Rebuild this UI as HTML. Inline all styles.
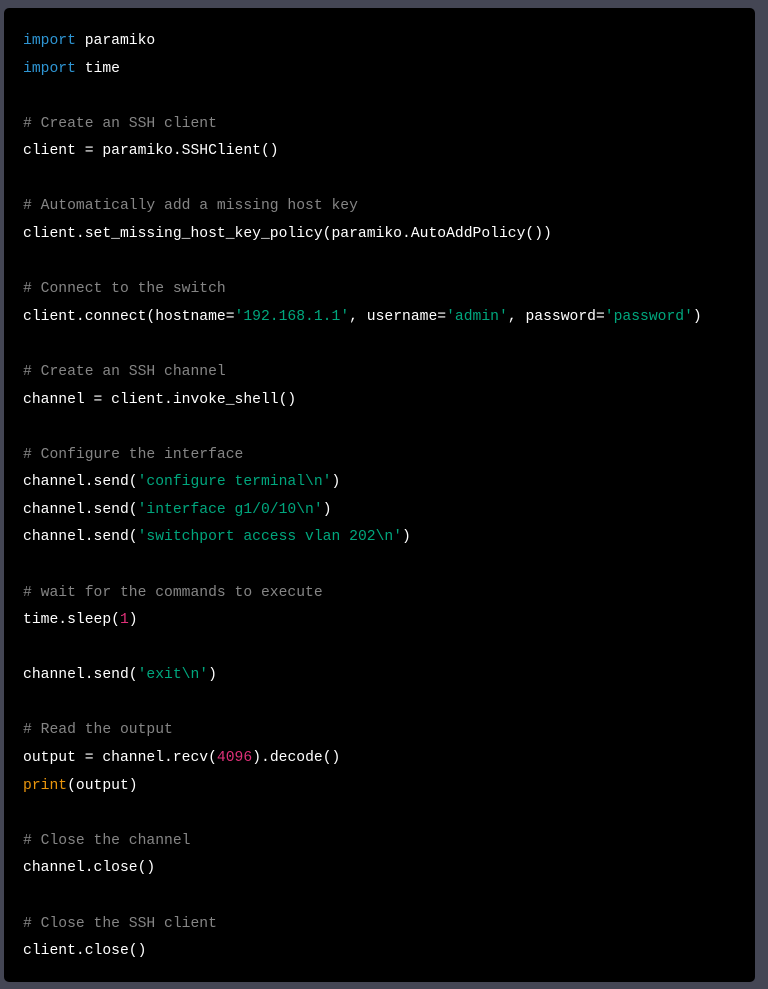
<!DOCTYPE html>
<html><head><meta charset="utf-8"><style>
html,body{margin:0;padding:0;background:#444654;width:768px;height:989px;overflow:hidden}
.box{position:absolute;left:4px;top:8px;width:751px;height:974px;background:#000;border-radius:5px}
pre{margin:0;position:absolute;left:23px;top:28px;font-family:"Liberation Mono","DejaVu Sans Mono",monospace;font-size:14.7px;line-height:27.58px;color:#fff;white-space:pre}
.k{color:#2e95d3}.s{color:#00a67d}.n{color:#df3079}.c{color:#858585}.p{color:#e9950c}
</style></head><body><div class="box"></div><pre><span class="k">import</span> paramiko
<span class="k">import</span> time

<span class="c"># Create an SSH client</span>
client = paramiko.SSHClient()

<span class="c"># Automatically add a missing host key</span>
client.set_missing_host_key_policy(paramiko.AutoAddPolicy())

<span class="c"># Connect to the switch</span>
client.connect(hostname=<span class="s">'192.168.1.1'</span>, username=<span class="s">'admin'</span>, password=<span class="s">'password'</span>)

<span class="c"># Create an SSH channel</span>
channel = client.invoke_shell()

<span class="c"># Configure the interface</span>
channel.send(<span class="s">'configure terminal\n'</span>)
channel.send(<span class="s">'interface g1/0/10\n'</span>)
channel.send(<span class="s">'switchport access vlan 202\n'</span>)

<span class="c"># wait for the commands to execute</span>
time.sleep(<span class="n">1</span>)

channel.send(<span class="s">'exit\n'</span>)

<span class="c"># Read the output</span>
output = channel.recv(<span class="n">4096</span>).decode()
<span class="p">print</span>(output)

<span class="c"># Close the channel</span>
channel.close()

<span class="c"># Close the SSH client</span>
client.close()</pre></body></html>
